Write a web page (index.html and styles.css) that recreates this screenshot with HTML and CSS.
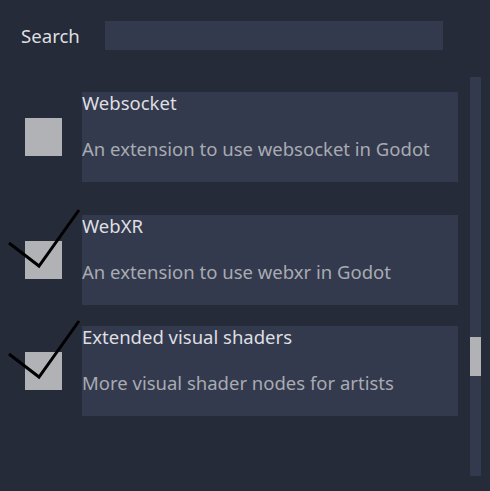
FILE: index.html
```html
<!DOCTYPE html>
<html>
<head>
<meta charset="utf-8">
<link rel="stylesheet" href="styles.css">
</head>
<body>
<div class="page">
  <div class="search-bar">
    <label class="search-label">Search</label>
    <div class="search-input"></div>
  </div>
  <div class="scroll-area">
    <div class="list">
      <div class="row">
        <div class="checkbox"></div>
        <div class="panel">
          <div class="title">Websocket</div>
          <div class="desc">An extension to use websocket in Godot</div>
        </div>
      </div>
      <div class="row row-spaced">
        <div class="checkbox checked">
          <svg class="check" width="80" height="70" viewBox="0 0 80 70"><polyline points="0,35 30,58 70,2" fill="none" stroke="#000" stroke-width="3"/></svg>
        </div>
        <div class="panel">
          <div class="title">WebXR</div>
          <div class="desc">An extension to use webxr in Godot</div>
        </div>
      </div>
      <div class="row">
        <div class="checkbox checked">
          <svg class="check" width="80" height="70" viewBox="0 0 80 70"><polyline points="0,35 30,58 70,2" fill="none" stroke="#000" stroke-width="3"/></svg>
        </div>
        <div class="panel">
          <div class="title">Extended visual shaders</div>
          <div class="desc">More visual shader nodes for artists</div>
        </div>
      </div>
    </div>
    <div class="scrollbar">
      <div class="thumb"></div>
    </div>
  </div>
</div>
</body>
</html>
```

FILE: styles.css
```css
html, body {
  margin: 0;
  padding: 0;
  background: #252b38;
  width: 490px;
  height: 491px;
  overflow: hidden;
  font-family: "Noto Sans", "Open Sans", sans-serif;
}

.page {
  padding-top: 21px;
}

.search-bar {
  display: flex;
  align-items: center;
  height: 29px;
  padding-left: 21px;
}

.search-label {
  width: 84px;
  font-size: 18.6px;
  color: #dfdfe1;
  line-height: 29px;
}

.search-input {
  width: 338px;
  height: 29px;
  background: #333a4d;
}

.scroll-area {
  margin-top: 27px;
  height: 399px;
  display: flex;
}

.list {
  width: 470px;
  padding-top: 15px;
  display: flex;
  flex-direction: column;
  gap: 21px;
  overflow: hidden;
}

.row {
  display: flex;
  align-items: center;
}

.row-spaced {
  margin-top: 12px;
}

.checkbox {
  position: relative;
  width: 37px;
  height: 38px;
  margin-left: 25px;
  margin-right: 20px;
  background: #b1b2b6;
  flex: none;
}

.check {
  position: absolute;
  left: -16px;
  top: -33px;
  overflow: visible;
}

.panel {
  width: 376px;
  height: 90px;
  background: #333a4d;
}

.title {
  font-size: 18.5px;
  line-height: 22px;
  color: #dfdfe1;
}

.desc {
  margin-top: 24px;
  font-size: 18.5px;
  line-height: 22px;
  color: #a8abb2;
}

.scrollbar {
  width: 11px;
  height: 399px;
  background: #333a4d;
  padding-top: 260px;
  box-sizing: border-box;
}

.thumb {
  width: 11px;
  height: 39px;
  background: #b1b2b6;
}
```
